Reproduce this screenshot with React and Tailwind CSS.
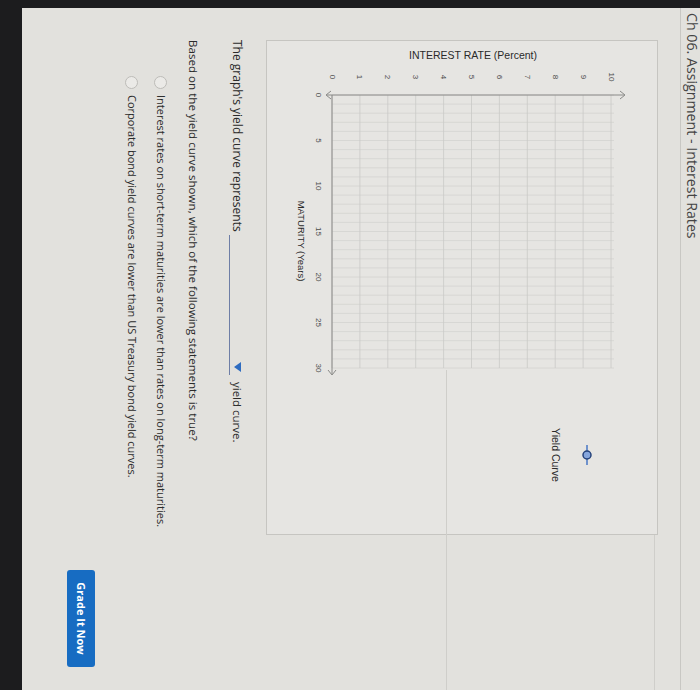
import React from 'react'

const yTicks = [0, 1, 2, 3, 4, 5, 6, 7, 8, 9, 10]
const xTicks = [0, 5, 10, 15, 20, 25, 30]
const years = Array.from({ length: 31 }, (_, i) => i)

const X0 = 54
const Y0 = 325
const XS = 9.1
const YS = 27.9

const yPos = v => Y0 - v * YS
const xPos = t => X0 + t * XS

const Chart = () => (
    <svg width="372" height="390" viewBox="0 0 372 390" style={{ fontFamily: '"Liberation Sans", Arial, sans-serif' }}>
        <text x="14" y="184" transform="rotate(-90 14 184)" textAnchor="middle" dominantBaseline="central" fontSize="10.5" fill="#2a2a2a">
            INTEREST RATE (Percent)
        </text>

        {years.map(t => (
            <line key={'v' + t} x1={xPos(t)} y1={yPos(10) - 3} x2={xPos(t)} y2={Y0} stroke="#d3d3d0" strokeWidth="0.8" />
        ))}
        {yTicks.map(v => (
            <line key={'h' + v} x1={X0} y1={yPos(v)} x2={xPos(30)} y2={yPos(v)} stroke="#c9c9c6" strokeWidth="0.8" />
        ))}

        {/* axes */}
        <line x1={X0} y1={Y0 + 5} x2={X0} y2={33} stroke="#8a8a88" strokeWidth="1" />
        <line x1={X0} y1={Y0} x2={xPos(30) + 6} y2={Y0} stroke="#8a8a88" strokeWidth="1" />
        <polyline points={`${X0 - 4},37 ${X0},32 ${X0 + 4},37`} fill="none" stroke="#8a8a88" strokeWidth="1" />
        <polyline points={`${X0 - 4},${Y0 + 1} ${X0},${Y0 + 6} ${X0 + 4},${Y0 + 1}`} fill="none" stroke="#8a8a88" strokeWidth="1" />
        <polyline points={`${xPos(30) + 2},${Y0 - 4} ${xPos(30) + 7},${Y0} ${xPos(30) + 2},${Y0 + 4}`} fill="none" stroke="#8a8a88" strokeWidth="1" />

        {yTicks.map(v => (
            <text key={'yl' + v} x="36" y={yPos(v)} textAnchor="middle" dominantBaseline="central" fontSize="8" fill="#4a4a4a">
                {v}
            </text>
        ))}
        {xTicks.map(t => (
            <text key={'xl' + t} x={xPos(t)} y="339" textAnchor="middle" dominantBaseline="central" fontSize="8" fill="#4a4a4a">
                {t}
            </text>
        ))}

        <text x="200" y="356" textAnchor="middle" dominantBaseline="central" fontSize="9.5" fill="#2a2a2a">
            MATURITY (Years)
        </text>
    </svg>
)

const Radio = ({ label }) => (
    <div className="flex items-center h-[16px]">
        <span className="w-[13px] h-[13px] rounded-full border border-[#bdbcb8] bg-[#ebeae7] ml-[68px] mr-[6px] shrink-0" />
        <span className="whitespace-nowrap text-[11px]">{label}</span>
    </div>
)

const App = () => {
    return (
        <div className="w-[700px] h-[690px] overflow-hidden bg-[#1c1c1e]">
            <div className="w-[690px] h-[700px] origin-top-left [transform:translateX(700px)_rotate(90deg)] bg-[#e2e1dd] flex flex-col relative">
                <div className="flex flex-1">
                    <div className="w-[8px] bg-[#1c1c1e]" />
                    <div className="flex-1 flex flex-col text-[#2b2b2b] text-[11px] font-['Open_Sans',sans-serif]">
                        {/* header */}
                        <div className="h-[20px] border-b border-[#c8c7c3] overflow-hidden">
                            <p className="pl-[5px] -mt-[2px] text-[14.2px] leading-[20px] text-[#444] whitespace-nowrap">
                                Ch 06. Assignment - Interest Rates
                            </p>
                        </div>

                        {/* graph panel */}
                        <div className="mt-[22px] ml-[32px] flex">
                            <div className="w-[495px] h-[392px] border border-[#c6c5c1] bg-[#e6e5e2] flex">
                                <Chart />
                                <div className="flex flex-col items-center w-[60px] ml-[12px] pt-[65px]">
                                    <svg width="22" height="10" viewBox="0 0 22 10">
                                        <line x1="1" y1="5" x2="21" y2="5" stroke="#6f92cc" strokeWidth="2" />
                                        <circle cx="11" cy="5" r="4" fill="#86a6dc" stroke="#25427a" strokeWidth="1.5" />
                                    </svg>
                                    <span className="mt-[20px] text-[10.5px] leading-[12px] text-[#2a2a2a] font-['Liberation_Sans',Arial,sans-serif]">
                                        Yield Curve
                                    </span>
                                </div>
                            </div>
                            <div className="flex-1 border-t border-[#cfceca] mt-[3px]" />
                        </div>

                        {/* question */}
                        <div className="mt-[21px] ml-[32px] flex items-end h-[16px] leading-[16px]">
                            <span className="w-[195px] shrink-0 whitespace-nowrap text-[12px]">The graph's yield curve represents</span>
                            <span className="w-[140px] shrink-0 h-[13px] border-b border-[#6e7ea6] flex justify-end items-start pr-[3px]">
                                <svg width="10" height="7" viewBox="0 0 10 7" className="mt-[1px]">
                                    <path d="M0 0 L10 0 L5 7 Z" fill="#2f6cc0" />
                                </svg>
                            </span>
                            <span className="ml-[7px] whitespace-nowrap text-[11.5px]">yield curve.</span>
                        </div>

                        <p className="mt-[28px] ml-[32px] leading-[16px] text-[11.6px] whitespace-nowrap">
                            Based on the yield curve shown, which of the following statements is true?
                        </p>

                        <div className="mt-[16px] flex flex-col gap-[13px] leading-[16px]">
                            <Radio label="Interest rates on short-term maturities are lower than rates on long-term maturities." />
                            <Radio label="Corporate bond yield curves are lower than US Treasury bond yield curves." />
                        </div>

                        <div className="mt-[29px] flex justify-end pr-[23px]">
                            <button className="w-[97px] h-[28px] rounded-[3px] bg-[#176cc2] text-white text-[11px] font-bold">
                                Grade It Now
                            </button>
                        </div>
                    </div>
                </div>
                <div className="h-[22px] bg-[#1c1c1e]" />
                <div className="absolute left-[370px] right-0 top-[253px] h-px bg-[#cfceca]" />
            </div>
        </div>
    )
}

export default App
